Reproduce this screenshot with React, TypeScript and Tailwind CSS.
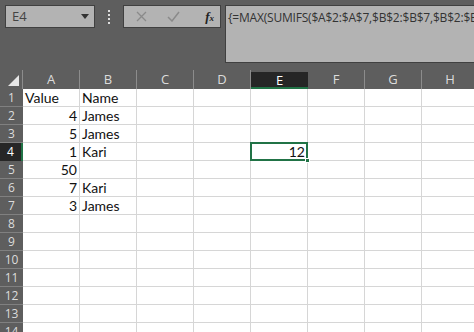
import React from 'react';

const cols = ['A', 'B', 'C', 'D', 'E', 'F', 'G', 'H'];

// row -> col -> [text, align]
const data: Record<number, Record<string, [string, 'l' | 'r']>> = {
  1: { A: ['Value', 'l'], B: ['Name', 'l'] },
  2: { A: ['4', 'r'], B: ['James', 'l'] },
  3: { A: ['5', 'r'], B: ['James', 'l'] },
  4: { A: ['1', 'r'], B: ['Kari', 'l'], E: ['12', 'r'] },
  5: { A: ['50', 'r'] },
  6: { A: ['7', 'r'], B: ['Kari', 'l'] },
  7: { A: ['3', 'r'], B: ['James', 'l'] },
};

const rows = Array.from({ length: 14 }, (_, i) => i + 1);

const Toolbar: React.FC = () => (
  <div className="flex items-start h-[70px] pt-[5px] pl-[5px]" style={{ fontFamily: '"Open Sans", sans-serif' }}>
    <div className="w-[90px] h-[23px] bg-[#b3b3b3] border border-[#404040] flex items-center justify-between pl-[6px] pr-[5px]">
      <span className="text-[13px] text-[#444]">E4</span>
      <svg width="8" height="5" viewBox="0 0 8 5"><path d="M0 0h8L4 5z" fill="#333" /></svg>
    </div>
    <div className="w-[28px] h-[23px] flex flex-col items-center justify-center gap-[2px]">
      <span className="w-[2px] h-[2px] bg-[#ddd]" />
      <span className="w-[2px] h-[2px] bg-[#ddd]" />
      <span className="w-[2px] h-[2px] bg-[#ddd]" />
      <span className="w-[2px] h-[2px] bg-[#ddd]" />
    </div>
    <div className="w-[98px] h-[23px] bg-[#b3b3b3] border border-[#404040] flex items-center pl-[12px] pr-[6px]">
      <svg width="11" height="11" viewBox="0 0 11 11"><path d="M1 1l9 9M10 1l-9 9" stroke="#8a8a8a" strokeWidth="1.3" /></svg>
      <svg className="ml-[20px]" width="13" height="11" viewBox="0 0 13 11"><path d="M1 6l4 4 7-9" stroke="#8a8a8a" strokeWidth="1.5" fill="none" /></svg>
      <span className="ml-auto text-[13px] italic font-bold text-[#222]" style={{ fontFamily: '"Liberation Serif", serif' }}>
        f<span className="text-[9px]">x</span>
      </span>
    </div>
    <div className="ml-[4px] flex-1 h-[58px] bg-[#b3b3b3] border border-[#404040] border-r-0 overflow-hidden whitespace-nowrap pl-[2px] pt-[3px] text-[12px] tracking-[-0.2px] text-[#333]">
      {'{=MAX(SUMIFS($A$2:$A$7,$B$2:$B$7,$B$2:$B$7))}'}
    </div>
  </div>
);

const App: React.FC = () => {
  return (
    <div className="w-[474px] h-[332px] bg-[#5e5e5e] overflow-hidden">
      <Toolbar />
      <div
        className="grid grid-cols-[23px_repeat(8,57px)] grid-rows-[19px_repeat(14,18px)]"
        style={{ fontFamily: '"Open Sans", sans-serif' }}
      >
        {/* header row */}
        <div className="relative border-r border-[#8c8c8c]">
          <svg className="absolute right-[3px] bottom-[3px]" width="11" height="11" viewBox="0 0 11 11">
            <path d="M11 0v11H0z" fill="#e6e6e6" />
          </svg>
        </div>
        {cols.map((c) =>
          c === 'E' ? (
            <div
              key={c}
              className="bg-[#262626] border-b-2 border-[#217346] text-white text-[13px] leading-[17px] text-center mt-[2px]"
            >
              {c}
            </div>
          ) : (
            <div key={c} className="border-r border-[#8c8c8c] text-[#dcdcdc] text-[13px] leading-[19px] text-center">
              {c}
            </div>
          )
        )}
        {rows.map((r) => (
          <React.Fragment key={r}>
            {r === 4 ? (
              <div className="bg-[#262626] border-r-2 border-[#217346] text-white text-[12px] leading-[18px] text-center">
                {r}
              </div>
            ) : (
              <div className="border-b border-[#808080] text-[#dcdcdc] text-[12px] leading-[17px] text-center">{r}</div>
            )}
            {cols.map((c) => {
              const cell = data[r]?.[c];
              const sel = r === 4 && c === 'E';
              return (
                <div
                  key={c}
                  className={`relative bg-white border-r border-b border-[#d6d6d6] text-[14px] leading-[17px] text-[#111] px-[2px] whitespace-nowrap ${
                    cell?.[1] === 'r' ? 'text-right' : 'text-left'
                  } ${sel ? 'z-10' : ''}`}
                  style={{ fontFamily: 'Lato, "Open Sans", sans-serif' }}
                >
                  {cell?.[0]}
                  {sel && (
                    <>
                      <div className="absolute -left-[1px] -top-[1px] w-[58px] h-[19px] border-2 border-[#217346]" />
                      <div className="absolute -right-[3px] -bottom-[3px] w-[5px] h-[5px] bg-[#217346] border border-white" />
                    </>
                  )}
                </div>
              );
            })}
          </React.Fragment>
        ))}
      </div>
    </div>
  );
};

export default App;
